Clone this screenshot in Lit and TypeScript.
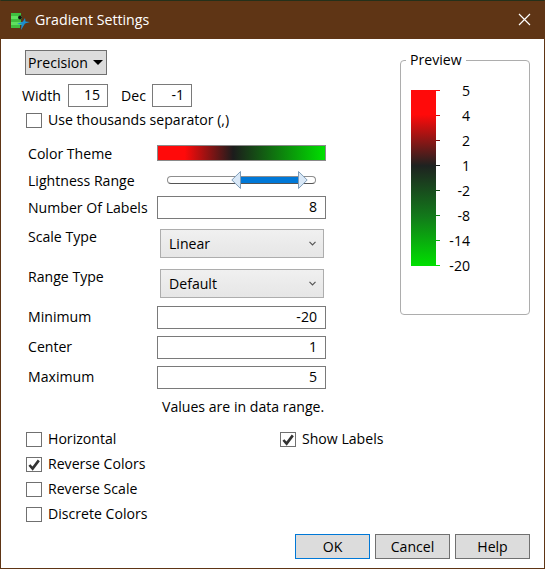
import { LitElement, html, css, svg } from "lit";
import { customElement } from "lit/decorators.js";

const check = svg`<svg class="tick" viewBox="0 0 16 16" width="16" height="16"><path d="M3.4 8 L6.6 11.6 L12.8 3.4" fill="none" stroke="#333" stroke-width="2.6"/></svg>`;

const Box = (label: string, on = false) => html`<label class="check"><span class="box">${on ? check : ""}</span><span class="ct">${label}</span></label>`;

@customElement("app-root")
export class AppRoot extends LitElement {
  static styles = css`
    :host { display: block; width: 545px; height: 569px; font-family: "Open Sans", "Noto Sans", sans-serif; font-size: 14.1px; color: #000; }
    * { box-sizing: border-box; }
    .win { width: 545px; height: 569px; background: #fff; border: 1px solid #5f3515; border-top: 1px solid #24301a; display: flex; flex-direction: column; }
    .title { height: 38px; background: #5f3515; color: #fff; display: flex; align-items: center; padding: 0 0 0 9px; font-size: 14.2px; flex: none; }
    .title .logo { margin-right: 5px; position: relative; top: 1px; }
    .title .name { flex: 1; position: relative; top: -1px; }
    .title .x { margin-right: 13px; position: relative; top: -1px; }
    .body { flex: 1; display: flex; position: relative; }
    .left { width: 399px; flex: none; padding: 11px 0 0 21px; display: flex; flex-direction: column; }
    .right { flex: 1; padding: 11px 0 0 0; }
    .prec { width: 82px; height: 25px; margin-left: 3px; background: #dcdcdc; border: 1px solid #707070; display: flex; align-items: center; padding-left: 2px; gap: 5px; }
    .caret { width: 0; height: 0; border-left: 5px solid transparent; border-right: 5px solid transparent; border-top: 5px solid #000; }
    .wd { display: flex; align-items: center; height: 23px; margin-top: 9px; }
    .input { height: 23px; border: 1px solid #7a7a7a; background: #fff; text-align: right; padding-right: 8px; line-height: 20px; }
    .input.sm { width: 40px; padding-right: 7px; }
    .wd .w { width: 46px; }
    .wd .d { width: 44px; padding-left: 13px; }
    .check { display: flex; align-items: center; gap: 6px; height: 15px; }
    .ct { position: relative; top: -1px; }
    .box { width: 16px; height: 15px; border: 1px solid #707070; background: #fff; display: block; position: relative; flex: none; }
    .tick { position: absolute; left: -1px; top: -1px; }
    .thou { margin: 6px 0 0 4px; }
    .row { display: flex; align-items: center; padding-left: 6px; }
    .row .lab { width: 129px; flex: none; }
    .up .lab { position: relative; top: -1px; }
    .theme { margin-top: 17px; height: 16px; }
    .bar { width: 169px; height: 16px; border: 1px solid #8a8a8a; background: linear-gradient(to right, #ff0a0a 0%, #ff0a0a 16%, #1c1c1c 45%, #00e000 100%); }
    .light { margin-top: 9px; height: 20px; }
    .slider { width: 169px; height: 20px; position: relative; }
    .track { position: absolute; left: 10px; top: 6px; width: 149px; height: 8px; border: 1px solid #8e8e8e; border-bottom-color: #555; border-radius: 4px; background: #fff; }
    .fill { position: absolute; left: 80px; top: 7px; width: 64px; height: 6px; background: #0078d7; }
    .thumb { position: absolute; top: 0; }
    .thumb.a { left: 74px; }
    .thumb.b { left: 141px; }
    .inp { margin-top: 6px; height: 23px; }
    .inp .input { width: 169px; }
    .sel { height: 29px; }
    .sel .lab { position: relative; top: -7px; }
    .select { width: 164px; height: 29px; margin-left: 3px; background: linear-gradient(#f0f0f0, #e6e6e6); border: 1px solid #adadad; display: flex; align-items: center; justify-content: space-between; padding: 0 7px 0 8px; }
    .sp1 { margin-top: 10px; }
    .sp2 { margin-top: 11px; }
    .sp3 { margin-top: 8px; }
    .sp4 { margin-top: 7px; }
    .note { margin: 8px 0 0 140px; height: 20px; line-height: 20px; white-space: nowrap; }
    .opts { display: flex; margin: 15px 0 0 4px; }
    .col { width: 254px; flex: none; display: flex; flex-direction: column; gap: 10px; }
    .col.short { width: 110px; }
    .preview { margin-top: 10px; width: 130px; height: 255px; border: 1px solid #adadad; border-radius: 4px; padding: 29px 0 0 10px; position: relative; }
    .legend { position: absolute; left: 5px; top: -11px; background: #fff; padding: 0 4px; line-height: 19px; }
    .scale { display: flex; }
    .grad { width: 25px; height: 176px; background: linear-gradient(#ff0a0a 0%, #ff0a0a 14%, #1e2220 43%, #127a1a 72%, #00e000 100%); }
    .ticks { width: 4px; height: 176px; display: flex; flex-direction: column; justify-content: space-between; }
    .ticks i { display: block; height: 1px; width: 4px; }
    .labels { width: 30px; height: 176px; display: flex; flex-direction: column; justify-content: space-between; text-align: right; }
    .labels span { display: block; height: 1px; line-height: 1px; }
    .btns { position: absolute; left: 294px; bottom: 9px; display: flex; gap: 5px; }
    .btn { width: 75px; height: 25px; background: #dcdcdc; border: 1px solid #707070; text-align: center; line-height: 24px; }
    .btn.def { border-color: #0078d7; }
  `;

  render() {
    const tickColors = ["#ff0a0a", "#d80c0c", "#7a1010", "#1e2220", "#144a18", "#128018", "#08b010", "#00e000"];
    const labs = ["5", "4", "2", "1", "-2", "-8", "-14", "-20"];
    return html`<div class="win">
      <div class="title">
        <svg class="logo" width="20" height="19" viewBox="0 0 20 19">
          <rect x="1" y="1" width="10" height="3" fill="#3fbf3f"/>
          <rect x="1" y="4" width="11" height="3" fill="#5fe05f"/>
          <rect x="1" y="7" width="10" height="3" fill="#3fbf3f"/>
          <rect x="1" y="10" width="11" height="3" fill="#5fe05f"/>
          <rect x="1" y="13" width="9" height="3" fill="#3fbf3f"/>
          <circle cx="10" cy="5.5" r="1.9" fill="#111"/>
          <path d="M7 12 L13 9.5 L15 6 L15.5 9.5 L20 10 L15 11.5 L11 18 L11.5 12.5 Z" fill="#1c8fd0"/>
        </svg>
        <span class="name">Gradient Settings</span>
        <svg class="x" width="13" height="13" viewBox="0 0 13 13"><path d="M1 1 L12 12 M12 1 L1 12" stroke="#fff" stroke-width="1.2"/></svg>
      </div>
      <div class="body">
        <div class="left">
          <div class="prec"><span>Precision</span><span class="caret"></span></div>
          <div class="wd">
            <span class="w">Width</span><span class="input sm">15</span>
            <span class="d">Dec</span><span class="input sm">-1</span>
          </div>
          <div class="thou">${Box("Use thousands separator (,)")}</div>
          <div class="row theme"><span class="lab">Color Theme</span><div class="bar"></div></div>
          <div class="row light"><span class="lab">Lightness Range</span>
            <div class="slider">
              <div class="track"></div><div class="fill"></div>
              <svg class="thumb a" width="10" height="20" viewBox="0 0 10 20"><path d="M9.5 1.5 L0.8 10 L9.5 18.5 Z" fill="#d9e8f7" stroke="#7f9db9"/></svg>
              <svg class="thumb b" width="10" height="20" viewBox="0 0 10 20"><path d="M0.5 1.5 L9.2 10 L0.5 18.5 Z" fill="#d9e8f7" stroke="#7f9db9"/></svg>
            </div>
          </div>
          <div class="row inp"><span class="lab">Number Of Labels</span><span class="input">8</span></div>
          <div class="row sel sp1"><span class="lab">Scale Type</span><div class="select"><span>Linear</span>${this.chev()}</div></div>
          <div class="row sel sp2"><span class="lab">Range Type</span><div class="select"><span>Default</span>${this.chev()}</div></div>
          <div class="row inp up sp3"><span class="lab">Minimum</span><span class="input">-20</span></div>
          <div class="row inp up sp4"><span class="lab">Center</span><span class="input">1</span></div>
          <div class="row inp up sp4"><span class="lab">Maximum</span><span class="input">5</span></div>
          <div class="note">Values are in data range.</div>
          <div class="opts">
            <div class="col">${Box("Horizontal")}${Box("Reverse Colors", true)}${Box("Reverse Scale")}${Box("Discrete Colors")}</div>
            <div class="col short">${Box("Show Labels", true)}</div>
          </div>
        </div>
        <div class="right">
          <div class="preview">
            <span class="legend">Preview</span>
            <div class="scale">
              <div class="grad"></div>
              <div class="ticks">${tickColors.map((c) => html`<i style="background:${c}"></i>`)}</div>
              <div class="labels">${labs.map((l) => html`<span>${l}</span>`)}</div>
            </div>
          </div>
        </div>
        <div class="btns"><div class="btn def">OK</div><div class="btn">Cancel</div><div class="btn">Help</div></div>
      </div>
    </div>`;
  }

  chev() {
    return html`<svg width="7" height="5" viewBox="0 0 7 5"><path d="M0.5 0.8 L3.5 3.8 L6.5 0.8" fill="none" stroke="#555" stroke-width="1.2"/></svg>`;
  }
}
